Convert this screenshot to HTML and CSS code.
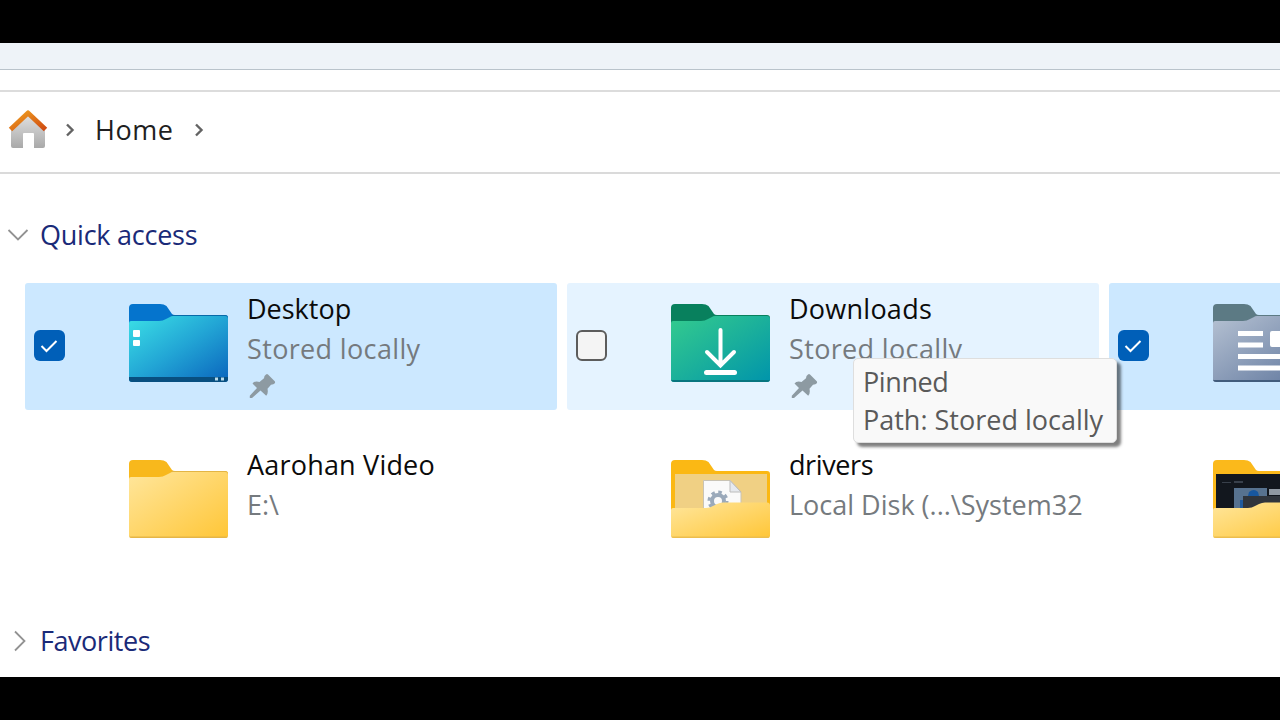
FILE: index.html
```
<!DOCTYPE html>
<html lang="en">
<head>
  <meta charset="UTF-8">
  <title>Home</title>
  <meta name="viewport" content="width=device-width,initial-scale=1">
  <link rel="stylesheet" href="styles.css">
</head>
<body>
  <!-- shared shapes and gradients -->
  <svg class="defs" width="0" height="0">
    <defs>
      <linearGradient id="blue" x1="0" y1="0" x2="1" y2="1"><stop offset="0" stop-color="#3be0e6"/><stop offset=".5" stop-color="#22a5d5"/><stop offset="1" stop-color="#0a64bd"/></linearGradient>
      <linearGradient id="green" x1="0" y1="0" x2="1" y2="1"><stop offset="0" stop-color="#34cb8e"/><stop offset=".5" stop-color="#1bb09b"/><stop offset="1" stop-color="#0094ab"/></linearGradient>
      <linearGradient id="grey" x1="0" y1="0" x2="1" y2="1"><stop offset="0" stop-color="#b5c1d2"/><stop offset="1" stop-color="#61789e"/></linearGradient>
      <linearGradient id="yellow" x1="0" y1="0" x2="1" y2="1"><stop offset="0" stop-color="#ffe69c"/><stop offset="1" stop-color="#ffc637"/></linearGradient>
      <linearGradient id="roof" x1="0" y1="0" x2="1" y2="1"><stop offset="0" stop-color="#f0a020"/><stop offset="1" stop-color="#cf4a12"/></linearGradient>
      <linearGradient id="wall" x1="0" y1="0" x2="0" y2="1"><stop offset="0" stop-color="#e2e2e2"/><stop offset="1" stop-color="#a9a9a9"/></linearGradient>
      <path id="back" d="M1 77V5q0-4 4-4H32q4 0 6.500 2L44 11q1 1 3 1H97q3 0 3 3V77Z"/>
      <path id="front" d="M1 20q0-2 2-2H31q4 0 7-2l4-2q1-1 3-1H97q3 0 3 3V76q0 3-3 3H4q-3 0-3-3Z"/>
      <path id="pocket" d="M1 51q0-2 2-2H36q4 0 7-2l4-2q3-1.500 6-1.500H97q3 0 3 3V76q0 3-3 3H4q-3 0-3-3Z"/>
      <path id="pin" d="M17 .5q1-.8 2 0l6.500 6.500q1 1 .3 2.200-1 1.300-3.800 1.600l-3.500 4q1 5-1.300 7l-5.700-5.300L3 24H.8v-2.200L8 14 3.500 9.500q2-2.800 7-1.500L15 4.200q0-2.500 2-3.700Z"/>
    </defs>
  </svg>

  <div class="window">
    <div class="titlebar"></div>
    <div class="toolbar"></div>

    <div class="address">
      <svg class="home" width="40" height="40" viewBox="0 0 40 40">
        <path fill="url(#wall)" d="M3 18 20 4 37 18V36q0 2-2 2H26V24q0-1-1-1H16q-1 0-1 1V38H5q-2 0-2-2Z"/>
        <path fill="none" stroke="url(#roof)" stroke-width="5" stroke-linejoin="round" d="M2.500 19.500 20 3 37.500 19.500"/>
      </svg>
      <svg class="sep" width="10" height="14" viewBox="0 0 10 14"><path d="M2 1.500 7.500 7 2 12.500"/></svg>
      <span class="crumb">Home</span>
      <svg class="sep" width="10" height="14" viewBox="0 0 10 14"><path d="M2 1.500 7.500 7 2 12.500"/></svg>
    </div>

    <div class="content">
      <div class="group">
        <svg class="arrow" width="22" height="22" viewBox="0 0 22 22"><path d="M1.500 6 11 15.500 20.500 6"/></svg>
        <span class="t-quick">Quick access</span>
      </div>

      <div class="grid">
        <div class="tile selected">
          <div class="check on"><svg width="31" height="31" viewBox="0 0 31 31"><path d="M7.500 16 12.500 21 22.500 11"/></svg></div>
          <svg class="folder" width="102" height="81" viewBox="0 0 102 81">
            <use href="#back" fill="#0574cd"/>
            <path fill="#086aa8" d="M44 12H97q3 0 3 3v3H40Z"/>
            <use href="#front" fill="url(#blue)"/>
            <path fill="#084f80" d="M1 74H100v2q0 3-3 3H4q-3 0-3-3Z"/>
            <path fill="#fff" d="M6 27h5q1 0 1 1v5q0 1-1 1H6q-1 0-1-1V28q0-1 1-1ZM6 37h5q1 0 1 1v4q0 1-1 1H6q-1 0-1-1V38q0-1 1-1Z"/>
            <path fill="#b9dcec" d="M87 74.500h3v3h-3ZM93 74.500h3v3h-3Z"/>
          </svg>
          <div class="info">
            <div class="name">Desktop</div>
            <div class="sub t-stored">Stored locally</div>
            <svg class="pin" width="27" height="25" viewBox="0 0 27 25"><use href="#pin"/></svg>
          </div>
        </div>

        <div class="tile hover">
          <div class="check"></div>
          <svg class="folder" width="102" height="81" viewBox="0 0 102 81">
            <use href="#back" fill="#08805d"/>
            <use href="#front" fill="url(#green)"/>
            <path fill="#08757f" d="M1 77H100q-.5 2-3 2H4q-2.500 0-3-2Z"/>
            <path fill="none" stroke="#fff" stroke-width="4" stroke-linecap="round" d="M50.500 27V62M37 49 50.500 62.500 64 49"/>
            <path fill="none" stroke="#fff" stroke-width="5" stroke-linecap="round" d="M36.500 69.500H64.500"/>
          </svg>
          <div class="info">
            <div class="name t-downloads">Downloads</div>
            <div class="sub t-stored">Stored locally</div>
            <svg class="pin" width="27" height="25" viewBox="0 0 27 25"><use href="#pin"/></svg>
          </div>
          <div class="tooltip">
            <div class="t-pinned">Pinned</div>
            <div class="t-path">Path: Stored locally</div>
          </div>
        </div>

        <div class="tile selected">
          <div class="check on"><svg width="31" height="31" viewBox="0 0 31 31"><path d="M7.500 16 12.500 21 22.500 11"/></svg></div>
          <svg class="folder" width="102" height="81" viewBox="0 0 102 81">
            <use href="#back" fill="#5c7a84"/>
            <use href="#front" fill="url(#grey)"/>
            <path fill="#425c7c" d="M1 77H100q-.5 2-3 2H4q-2.500 0-3-2Z"/>
            <path fill="#fff" d="M26 28H51v5H26ZM26 39.500H51v5H26ZM26 51H76v5H26ZM26 62.500H76v5H26ZM60 28H76v16H60q-2 0-2-2V30q0-2 2-2Z"/>
          </svg>
        </div>

        <div class="tile">
          <div class="check none"></div>
          <svg class="folder" width="102" height="81" viewBox="0 0 102 81">
            <use href="#back" fill="#f8b81c"/>
            <path fill="#e3b545" d="M44 12H97q3 0 3 3v3H40Z"/>
            <use href="#front" fill="url(#yellow)"/>
            <path fill="#e5b547" d="M1 77.500H100q-.5 1.500-3 1.500H4q-2.500 0-3-1.500Z"/>
          </svg>
          <div class="info">
            <div class="name t-aarohan">Aarohan Video</div>
            <div class="sub">E:\</div>
          </div>
        </div>

        <div class="tile">
          <div class="check none"></div>
          <svg class="folder" width="102" height="81" viewBox="0 0 102 81">
            <use href="#back" fill="#fbb814"/>
            <path fill="#f0d084" d="M5 15H97V60H5Z"/>
            <path fill="#fafafa" stroke="#c9c3b4" d="M33.500 21.500H60L71 33V60H33.500Z"/>
            <path fill="#e6e9ee" stroke="#bcbcbc" d="M60 21.500V33H71Z"/>
            <circle cx="48" cy="42" r="6" fill="none" stroke="#9aa9ba" stroke-width="4"/>
            <circle cx="48" cy="42" r="9" fill="none" stroke="#9aa9ba" stroke-width="3" stroke-dasharray="3.534"/>
            <use href="#pocket" fill="url(#yellow)"/>
            <path fill="#ecbd4e" d="M1 77.500H100q-.5 1.500-3 1.500H4q-2.500 0-3-1.500Z"/>
          </svg>
          <div class="info">
            <div class="name t-drivers">drivers</div>
            <div class="sub">Local Disk (...\System32</div>
          </div>
        </div>

        <div class="tile">
          <div class="check none"></div>
          <svg class="folder" width="102" height="81" viewBox="0 0 102 81">
            <use href="#back" fill="#fbb91b"/>
            <path fill="#12171e" d="M4 15H100V60H4Z"/>
            <path fill="#38404b" d="M10 23h9v1h-9ZM22 22h9v2h-9Z"/>
            <path fill="#57728f" d="M22 29H55V50H22Z"/>
            <path fill="#17579f" d="M37 33q5-4 9 0l1 4H36Z"/>
            <path fill="#9099a3" d="M57 30H70v6H57Z"/>
            <path fill="#30353c" d="M31 37H80V50H31Z"/>
            <path fill="#1f5a9e" d="M28 41h3v8h-3Z"/>
            <use href="#pocket" fill="url(#yellow)"/>
            <path fill="#ecbd4e" d="M1 77.500H100q-.5 1.500-3 1.500H4q-2.500 0-3-1.500Z"/>
          </svg>
        </div>
      </div>

      <div class="group favorites">
        <svg class="arrow" width="22" height="22" viewBox="0 0 22 22"><path d="M6 1.500 15.500 11 6 20.500"/></svg>
        <span class="t-fav">Favorites</span>
      </div>
    </div>
  </div>
</body>
</html>
```
FILE: styles.css
```
* { box-sizing:border-box; }
body { margin:0; padding:43px 0; height:720px; background:#000; overflow:hidden; font-family:"Open Sans", "Noto Sans", sans-serif; font-size:27px; line-height:38px; white-space:nowrap; }
svg { display:block; flex:none; }
.defs { position:absolute; }
.window { height:634px; background:#fff; overflow:hidden; }
.titlebar { height:27px; background:#eef3f8; border-bottom:1px solid #b9c3cb; }
.toolbar { height:22px; border-bottom:2px solid #dcdcdc; }

.address { height:82px; display:flex; align-items:center; padding:0 0 4px 8px; border-bottom:2px solid #dadada; color:#1f1f1f; }
.crumb { width:79px; margin:0 20px; letter-spacing:.5px; }
.sep { margin-left:17px; fill:none; stroke:#636363; stroke-width:2.4; }
.crumb + .sep { margin-left:0; }

.content { padding-top:41px; }
.group { display:flex; align-items:center; height:40px; padding-left:7px; gap:11px; color:#1a2a78; }
.arrow { fill:none; stroke:#929292; stroke-width:1.8; }
.favorites { margin-top:55px; padding-left:9px; gap:9px; }

.grid { display:grid; grid-template-columns:repeat(3, 532px); grid-auto-rows:127px; gap:29px 10px; margin:28px 0 0 25px; }
.tile { position:relative; display:flex; border-radius:3px; padding-left:9px; }
.selected { background:#cce8ff; }
.hover { background:#e5f3ff; }
.check { flex:none; width:31px; height:31px; margin-top:47px; border:2px solid #5c5c5c; border-radius:6px; background:#f4f4f4; }
.check.on { border:0; background:#005fb8; }
.check.on path { fill:none; stroke:#fff; stroke-width:2; }
.check.none { visibility:hidden; }
.folder { margin:20px 0 0 63px; }
.info { padding:7px 0 0 17px; }
.name { height:40px; color:#0b0b0b; }
.sub { height:40px; color:#757a7e; }
.pin { margin:4px 0 0 2px; fill:#8d9aa2; }

.tooltip { position:absolute; z-index:2; left:286px; top:75px; width:264px; height:85px; padding:4px 9px; background:#f9f9f9; border:1px solid #dedede; border-radius:5px; box-shadow:4px 4px 3px rgba(0,0,0,.5); color:#5a5a5a; }

/* letter fit */
.t-quick { letter-spacing:-.25px; }
.t-fav { letter-spacing:-.45px; }
.t-stored { letter-spacing:.35px; }
.t-downloads { letter-spacing:.25px; }
.t-aarohan { letter-spacing:.2px; }
.t-drivers { letter-spacing:-.4px; }
.t-pinned { letter-spacing:-.4px; }
```
